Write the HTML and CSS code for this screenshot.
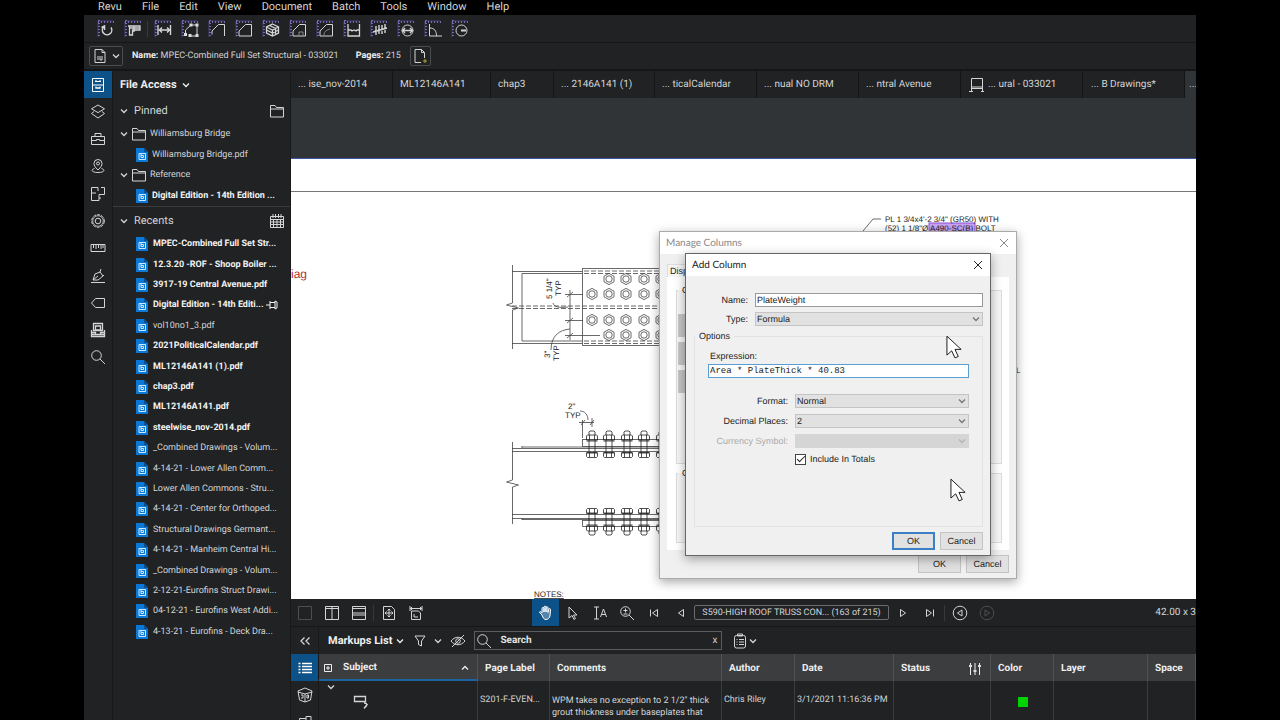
FILE: index.html
```html
<!DOCTYPE html>
<html lang="en">
<head>
<meta charset="utf-8">
<title>Revu</title>
<link rel="stylesheet" href="styles.css">
</head>
<body>
<svg class="sprite" aria-hidden="true">
  <symbol id="ruler" viewBox="0 0 20 20"><path d="M2 2v16M2 2h15" stroke="#4d3f7d" stroke-width="1"/><path d="M3 1v17M2 3h16" stroke="#7a68b4" stroke-width="2" stroke-dasharray="1 2"/></symbol>
  <symbol id="chev" viewBox="0 0 8 8"><path d="M1 2.500 4 5.500 7 2.500" stroke-width="1.300"/></symbol>
  <symbol id="folder" viewBox="0 0 16 16"><path d="M1.500 14V2.500h4.500l1.500 2h7V14zM1.500 6h13"/></symbol>
  <symbol id="pdf" viewBox="0 0 12 14"><path d="M0 0h8l4 4v10H0z" fill="#0a78d6" stroke="none"/><path d="M8 0v4h4z" fill="#0b4f93" stroke="none"/><path d="M3 5.500h6.500v6H3zM5 5.500v4h2.500v-2H5" stroke="#cfe8ff"/></symbol>
  <symbol id="glass" viewBox="0 0 16 16"><circle cx="6.500" cy="6.500" r="4.800"/><path d="m10 10 5 5"/></symbol>
  <symbol id="bolt" viewBox="-6 -16 12 28"><path d="M-3-11v-3l1-1h4l1 1v3M-5.500-10l1-1h9l1 1v4h-11zM-2.500-11v5M2.500-11v5M-3-6V7M3-6V7M-5.500 7h11v3.500l-1 1h-9l-1-1zM-2.500 7v4M2.500 7v4M-5.500-5h11M-5.500 6.500h11"/></symbol>
  <symbol id="hex" viewBox="-6 -6 12 12"><path d="M-5 2.800v-5.600L0-5.600 5-2.800v5.600L0 5.600z"/><circle r="3.200"/></symbol>
  <symbol id="cursor" viewBox="0 0 18 26"><path d="M1 1v20l5-4.500 3.500 7.500 3.500-1.500-3.500-7.500H16z" fill="#fff" stroke="#111"/></symbol>
</svg>

<div class="app">
  <nav class="menubar">
    <button>Revu</button><button>File</button><button>Edit</button><button>View</button><button>Document</button><button>Batch</button><button>Tools</button><button>Window</button><button>Help</button>
  </nav>

  <div class="toolbar">
    <button aria-label="Calibrate"><svg viewBox="0 0 20 20"><use href="#ruler"/><path d="M8 7.500a4.700 4.700 0 1 0 7 1M5.500 8.500 8.500 7v4" stroke-width="1.500"/></svg></button>
    <button aria-label="Measure tool"><svg viewBox="0 0 20 20"><use href="#ruler"/><path d="M5 7h12v4H9.500v5H6.500V7M7 9h10M11 7v6" stroke-width="1.300"/></svg></button>
    <i class="sep"></i>
    <button aria-label="Length"><svg viewBox="0 0 20 20"><use href="#ruler"/><path d="M5 6v10M17.500 6v10M6 11h11M9 8.500 6.500 11 9 13.500M14 8.500l2.500 2.500-2.500 2.500" stroke-width="1.400"/></svg></button>
    <button aria-label="Polylength"><svg viewBox="0 0 20 20"><use href="#ruler"/><path d="M5.500 15.500V11l5.500-5h6v11H10" /><path d="M4 14h3v3H4zM9.500 4.500h3v3h-3zM15.500 4.500h3v3h-3zM15.500 15h3v3h-3zM8.500 15h3v3h-3z" fill="#ddd" stroke="none"/></svg></button>
    <button aria-label="Perimeter"><svg viewBox="0 0 20 20"><use href="#ruler"/><path d="M5 15.500V12l6.500-6.500h6V17"/></svg></button>
    <button aria-label="Area"><svg viewBox="0 0 20 20"><use href="#ruler"/><path d="M5 17v-5l6.500-6.500h6V17z"/></svg></button>
    <button aria-label="Volume"><svg viewBox="0 0 20 20"><use href="#ruler"/><path d="m11.500 5 6 3v6l-6 3-6-3V8zM5.500 8l6 3 6-3M11.500 11v6M8.500 6.500l6 3v6M5.500 11l6 3 6-3" stroke-width="1.300"/></svg></button>
    <button aria-label="Cutout"><svg viewBox="0 0 20 20"><use href="#ruler"/><path d="M5 17v-5l6.500-6.500h6V17z"/><path d="M11 17v-4h4v4" stroke="#888"/></svg></button>
    <button aria-label="Arc cutout"><svg viewBox="0 0 20 20"><use href="#ruler"/><path d="M5 17v-5l6.500-6.500h6V17z"/><path d="M9 16c0-4 3-5 6-6" stroke="#888"/></svg></button>
    <button aria-label="Depth"><svg viewBox="0 0 20 20"><use href="#ruler"/><path d="M6 5v12h11.500V5M6 11h3l1 1 2-1 2 1 1-1h2.500" stroke-width="1.300"/></svg></button>
    <button aria-label="Count"><svg viewBox="0 0 20 20"><use href="#ruler"/><path d="M7 7v9M10 6v9M13 6v9M16 5v9M4 13l14-4" stroke-width="1.400"/></svg></button>
    <button aria-label="Diameter"><svg viewBox="0 0 20 20"><use href="#ruler"/><circle cx="11.500" cy="11.500" r="5.500"/><path d="M6 11.500h11M9 9l-2.500 2.500L9 14M14 9l2.500 2.500L14 14" stroke-width="1.400"/></svg></button>
    <button aria-label="Angle"><svg viewBox="0 0 20 20"><use href="#ruler"/><path d="M6.500 5v12H19M6.500 9c5 0 7 3 7 8"/></svg></button>
    <button aria-label="Radius"><svg viewBox="0 0 20 20"><use href="#ruler"/><circle cx="11.500" cy="11.500" r="5.500"/><path d="M11 11.500h5" stroke-width="2"/></svg></button>
  </div>

  <div class="filebar">
    <button class="outlined doc-btn" aria-label="Document"><svg class="i16" viewBox="0 0 16 16"><path d="M3 1.500h7l3 3v10H3zM10 1.500v3h3M6 8v4M8 8v4h2V8"/></svg><svg class="i8"><use href="#chev"/></svg></button>
    <span class="fname"><b>Name:</b> MPEC-Combined Full Set Structural - 033021</span>
    <span class="fpages"><b>Pages:</b> 215</span>
    <button class="outlined" aria-label="Add page"><svg class="i16" viewBox="0 0 16 16"><path d="M9 14.500H3v-13h6.500l3 3V10M9.500 1.500v3h3"/><path d="M13 11v4M11 13h4" stroke="#b5a02f"/></svg></button>
  </div>

  <div class="body">
    <nav class="rail">
      <button class="on" aria-label="File Access"><svg viewBox="0 0 16 16"><path d="M2.500 1.500h11v13h-11zM2.500 8h11M5 4.500h6M5 11h6M6 3v1.500h4V3M6 9.500V11h4V9.500"/></svg></button>
      <button aria-label="Layers"><svg viewBox="0 0 16 16"><path d="m8 1 6.500 3.800L8 8.600 1.500 4.800zM4 7.500 1.500 9.500 8 14l6.500-4.500L12 7.500"/></svg></button>
      <button aria-label="Tool Chest"><svg viewBox="0 0 16 16"><path d="M1.500 5.500h13v8h-13zM5 5.500v-3h6v3M1.500 9.500h5v-1h3v1h5"/></svg></button>
      <button aria-label="Places"><svg viewBox="0 0 16 16"><path d="M8 12C5 9 4 7.500 4 5.500a4 4 0 0 1 8 0c0 2-1 3.500-4 6.500zM4.500 10.500C0 12 2 14.500 8 14.500s8-2.500 3.500-4"/><circle cx="8" cy="5.500" r="1.500"/></svg></button>
      <button aria-label="Spaces"><svg viewBox="0 0 16 16"><path d="M8 1.500H1.500v13H5M8 1.500V5M11 1.500h3.500v7H9M1.500 7H6M9 8.500v6H5M9 12h2"/></svg></button>
      <button aria-label="Properties"><svg viewBox="0 0 16 16"><circle cx="8" cy="8" r="6.300" stroke-dasharray="3 1"/><circle cx="8" cy="8" r="5.300" stroke-width=".8"/><circle cx="8" cy="8" r="2.800"/></svg></button>
      <button aria-label="Measurements"><svg viewBox="0 0 16 16"><path d="M1 4.500h14v7H1zM3.500 5v3M6 5v4M8.500 5v3M11 5v4M13 5v3"/></svg></button>
      <button aria-label="Signatures"><svg viewBox="0 0 16 16"><path d="M1 14.500h14M3 12l2-6 5-2 3 4-5 4zM10 4l1-3M3 12l5-4M13 8l1-1"/></svg></button>
      <button aria-label="Flags"><svg viewBox="0 0 16 16"><path d="M5.500 3.500h9v9h-9L1.500 8z"/></svg></button>
      <button aria-label="Sets"><svg viewBox="0 0 16 16"><path d="M3.500 1.500h9v7h-9zM1.500 8v6.500h13V8M1.500 10.500h4v2h5v-2h4M1.500 12.500h13M5.500 4h5v4h-5z" stroke-width="1.300"/></svg></button>
      <button aria-label="Search"><svg viewBox="0 0 16 16"><use href="#glass"/></svg></button>
    </nav>

    <aside class="panel">
      <button class="panel-title">File Access <svg class="i8"><use href="#chev"/></svg></button>
      <h3 class="section pinned"><svg class="i8"><use href="#chev"/></svg><span>Pinned</span><svg class="i16"><use href="#folder"/></svg></h3>
      <ul class="tree">
        <li class="dir"><svg class="i8"><use href="#chev"/></svg><svg class="i16"><use href="#folder"/></svg><span>Williamsburg Bridge</span></li>
        <li><svg class="pdf"><use href="#pdf"/></svg><span>Williamsburg Bridge.pdf</span></li>
        <li class="dir"><svg class="i8"><use href="#chev"/></svg><svg class="i16"><use href="#folder"/></svg><span>Reference</span></li>
        <li class="open"><svg class="pdf"><use href="#pdf"/></svg><span>Digital Edition - 14th Edition ...</span></li>
      </ul>
      <h3 class="section recents"><svg class="i8"><use href="#chev"/></svg><span>Recents</span><svg class="i16" viewBox="0 0 16 16"><path d="M1.500 3.500h13v11h-13zM1.500 6.500h13M1.500 9h13M1.500 11.500h13M4.500 6v8M8 6v8M11.500 6v8M4 1v4M6.500 1v4M9.500 1v4M12 1v4"/></svg></h3>
      <ul class="files">
        <li class="open"><svg class="pdf"><use href="#pdf"/></svg><span>MPEC-Combined Full Set Str...</span></li>
        <li class="open"><svg class="pdf"><use href="#pdf"/></svg><span>12.3.20 -ROF - Shoop Boiler ...</span></li>
        <li class="open"><svg class="pdf"><use href="#pdf"/></svg><span>3917-19 Central Avenue.pdf</span></li>
        <li class="open"><svg class="pdf"><use href="#pdf"/></svg><span>Digital Edition - 14th Editi...</span><svg class="pin" viewBox="0 0 12 10"><path d="M0 5h4M4 1v8M4 2.500h5M4 7.500h5M9 1l2 1v6L9 9z"/></svg></li>
        <li><svg class="pdf"><use href="#pdf"/></svg><span>vol10no1_3.pdf</span></li>
        <li class="open"><svg class="pdf"><use href="#pdf"/></svg><span>2021PoliticalCalendar.pdf</span></li>
        <li class="open"><svg class="pdf"><use href="#pdf"/></svg><span>ML12146A141 (1).pdf</span></li>
        <li class="open"><svg class="pdf"><use href="#pdf"/></svg><span>chap3.pdf</span></li>
        <li class="open"><svg class="pdf"><use href="#pdf"/></svg><span>ML12146A141.pdf</span></li>
        <li class="open"><svg class="pdf"><use href="#pdf"/></svg><span>steelwise_nov-2014.pdf</span></li>
        <li><svg class="pdf"><use href="#pdf"/></svg><span>_Combined Drawings - Volum...</span></li>
        <li><svg class="pdf"><use href="#pdf"/></svg><span>4-14-21 - Lower Allen Comm...</span></li>
        <li><svg class="pdf"><use href="#pdf"/></svg><span>Lower Allen Commons - Stru...</span></li>
        <li><svg class="pdf"><use href="#pdf"/></svg><span>4-14-21 - Center for Orthoped...</span></li>
        <li><svg class="pdf"><use href="#pdf"/></svg><span>Structural Drawings Germant...</span></li>
        <li><svg class="pdf"><use href="#pdf"/></svg><span>4-14-21 - Manheim Central Hi...</span></li>
        <li><svg class="pdf"><use href="#pdf"/></svg><span>_Combined Drawings - Volum...</span></li>
        <li><svg class="pdf"><use href="#pdf"/></svg><span>2-12-21-Eurofins Struct Drawi...</span></li>
        <li><svg class="pdf"><use href="#pdf"/></svg><span>04-12-21 - Eurofins West Addi...</span></li>
        <li><svg class="pdf"><use href="#pdf"/></svg><span>4-13-21 - Eurofins - Deck Dra...</span></li>
      </ul>
    </aside>

    <main class="main">
      <div class="tabs">
        <button class="w102">... ise_nov-2014</button><button class="w98">ML12146A141</button><button class="w63">chap3</button><button class="w101">... 2146A141 (1)</button><button class="w102">... ticalCalendar</button><button class="w102">... nual NO DRM</button><button class="w102">... ntral Avenue</button><button class="w122"><svg class="i16" viewBox="0 0 16 16"><path d="M3.500 14V1.500h11V14M3.500 10h11M1 14.500h4M13 14.500h3M3.500 11.500h11"/></svg>... ural - 033021</button><button class="w102 pad">... B Drawings*</button><button class="current">...</button>
      </div>

      <div class="document">
        <svg class="sheet" viewBox="291 158 905 441" role="img" aria-label="Truss connection drawing">
          <path d="M291 158.500h905" stroke="#3955a5"/>
          <path d="M291 191.500h905" stroke="#777"/>
          <text x="291" y="278" class="red">iag</text>
          <g class="ink">
            <path d="M512.500 265v38l-6 2 12 3-6 2v39M512 271.500h70M512 343.500h70M582 273.500h-60v67.500h60M582.500 268.500h90M582.500 268v77.500h90"/>
            <path d="M584 271h80M584 273.500h80M584 341h80M584 343.500h80M512 306h150M512 308.500h150" stroke-dasharray="5 2"/>
            <path d="M570 290v50M565 294.500h18M565 320.500h18M565 335.500h35M567 297l6-5M567 323l6-5M567 338l6-5M553 303c1 4 6 5 15 4M551 350c0-14 8-20 19-21"/>
            <path d="M512.500 442v38l-6 2 12 3-6 2v37M512 448.500h150M512 451.500h150M512 514.500h150M512 518.500h150M522 447h138M522 519.500h138M522 446v2M522 518v2M582.500 439.500h80M582.500 439v7.500h80M582.500 520.500h80M582.500 520v6.500h80"/>
            <path d="M582.500 420v18M579 422.500h15M581 425l4-5M590 425l4-5M592 418v9M580 411c5 0 8 4 8 9"/>
            <path d="M863 231l10-12h8"/>
          </g>
          <g class="ink">
            <use href="#hex" x="603" y="273" width="12" height="12"/><use href="#hex" x="620" y="273" width="12" height="12"/><use href="#hex" x="638" y="273" width="12" height="12"/><use href="#hex" x="655" y="273" width="12" height="12"/>
            <use href="#hex" x="586" y="288" width="12" height="12"/><use href="#hex" x="603" y="288" width="12" height="12"/><use href="#hex" x="620" y="288" width="12" height="12"/><use href="#hex" x="638" y="288" width="12" height="12"/><use href="#hex" x="655" y="288" width="12" height="12"/>
            <use href="#hex" x="586" y="314" width="12" height="12"/><use href="#hex" x="603" y="314" width="12" height="12"/><use href="#hex" x="620" y="314" width="12" height="12"/><use href="#hex" x="638" y="314" width="12" height="12"/><use href="#hex" x="655" y="314" width="12" height="12"/>
            <use href="#hex" x="603" y="329" width="12" height="12"/><use href="#hex" x="620" y="329" width="12" height="12"/><use href="#hex" x="638" y="329" width="12" height="12"/><use href="#hex" x="655" y="329" width="12" height="12"/>
          </g>
          <g class="ink bolts">
            <use href="#bolt" x="586" y="430" width="12" height="28"/><use href="#bolt" x="603" y="430" width="12" height="28"/><use href="#bolt" x="621" y="430" width="12" height="28"/><use href="#bolt" x="638" y="430" width="12" height="28"/><use href="#bolt" x="656" y="430" width="12" height="28"/>
            <g transform="matrix(1 0 0 -1 0 966)"><use href="#bolt" x="586" y="430" width="12" height="28"/><use href="#bolt" x="603" y="430" width="12" height="28"/><use href="#bolt" x="621" y="430" width="12" height="28"/><use href="#bolt" x="638" y="430" width="12" height="28"/><use href="#bolt" x="656" y="430" width="12" height="28"/></g>
          </g>
          <rect x="929" y="223" width="46" height="10" fill="#c9a3f5" stroke="#8a4fd8"/>
          <g class="note">
            <text x="885" y="222">PL 1 3/4x4'-2 3/4" (GR50) WITH</text>
            <text x="885" y="231">(52) 1 1/8"Ø A490-SC(B) BOLT</text>
            <text x="1016" y="373">L</text>
            <text x="568" y="409">2"</text><text x="565" y="418">TYP</text>
            <text transform="translate(552 299) rotate(-90)">5 1/4"</text><text transform="translate(561 296) rotate(-90)">TYP</text>
            <text transform="translate(550 358) rotate(-90)">3"</text><text transform="translate(559 361) rotate(-90)">TYP</text>
            <text x="534" y="597" text-decoration="underline">NOTES:</text>
          </g>
        </svg>

        <section class="dialog manage" aria-label="Manage Columns">
          <header><h2>Manage Columns</h2><button aria-label="Close"><svg viewBox="0 0 10 10"><path d="m1 1 8 8M9 1 1 9"/></svg></button></header>
          <div class="manage-body">
            <span class="tab-label">Disp</span>
            <div class="tab-page">
              <fieldset class="tall"><legend>C</legend><button aria-label="Add"></button><button aria-label="Modify"></button><button aria-label="Remove"></button></fieldset>
              <fieldset class="short"><legend>C</legend></fieldset>
            </div>
            <div class="actions"><button>OK</button><button>Cancel</button></div>
          </div>
        </section>

        <section class="dialog add" aria-label="Add Column">
          <header><h2>Add Column</h2><button aria-label="Close"><svg viewBox="0 0 10 10"><path d="m1 1 8 8M9 1 1 9"/></svg></button></header>
          <form class="add-body">
            <div class="grid top">
              <label for="name">Name:</label><input id="name" type="text" value="PlateWeight">
              <label for="type">Type:</label><span class="drop"><select id="type"><option>Formula</option></select><svg class="i8"><use href="#chev"/></svg></span>
            </div>
            <fieldset>
              <legend>Options</legend>
              <label class="expr" for="expr">Expression:</label>
              <input id="expr" type="text" value="Area * PlateThick * 40.83">
              <div class="grid opts">
                <label for="format">Format:</label><span class="drop"><select id="format"><option>Normal</option></select><svg class="i8"><use href="#chev"/></svg></span>
                <label for="places">Decimal Places:</label><span class="drop"><select id="places"><option>2</option></select><svg class="i8"><use href="#chev"/></svg></span>
                <label class="dim" for="currency">Currency Symbol:</label><span class="drop off"><select id="currency" disabled><option></option></select><svg class="i8"><use href="#chev"/></svg></span>
              </div>
              <div class="check"><input id="totals" type="checkbox" checked><label for="totals">Include In Totals</label></div>
            </fieldset>
            <div class="actions"><button type="button" class="default">OK</button><button type="button">Cancel</button></div>
          </form>
        </section>
        <svg class="cursor c1"><use href="#cursor"/></svg>
        <svg class="cursor c2"><use href="#cursor"/></svg>
      </div>

      <div class="status">
        <button class="faint" aria-label="Single view"><svg viewBox="0 0 16 16"><path d="M1.500 1.500h13v13h-13z"/></svg></button>
        <button aria-label="Split vertical"><svg viewBox="0 0 16 16"><path d="M1.500 1.500h13v13h-13zM8 1.500v13M1.500 3.500h13"/></svg></button>
        <button aria-label="Split horizontal"><svg viewBox="0 0 16 16"><path d="M1.500 1.500h13v13h-13zM1.500 8h13M1.500 3.500h13M1.500 10h13"/></svg></button>
        <i class="sep"></i>
        <button aria-label="Fit page"><svg viewBox="0 0 16 16"><path d="M2.500 1.500h8l3 3v10h-11zM8 4v8M4 8h8M6.500 5.500 8 4l1.500 1.500M6.500 10.500 8 12l1.500-1.500M5.500 6.500 4 8l1.500 1.500M10.500 6.500 12 8l-1.500 1.500"/></svg></button>
        <button aria-label="Fit width"><svg viewBox="0 0 16 16"><path d="M3.500 6v8.500h9V8l-2-2zM2 3.500h12M2 1v5M14 1v5M4 2 2.500 3.500 4 5M12 2l1.500 1.500L12 5M6 9v3h4"/></svg></button>
        <div class="nav">
          <button class="on" aria-label="Pan"><svg viewBox="0 0 16 16"><path d="M4 10 1.500 7.500c0-1.500 1.500-1 2.500.500V3.500c0-1.500 2-1.500 2 0V7 2.300c0-1.600 2-1.600 2 0V7 2.800c0-1.500 2-1.500 2 0V7.500l.500-3c0-1.200 2-1.200 2 0L12 11c-.5 2-2 3.500-4 3.500S5 13 4 10z" fill="#fff" fill-opacity=".3"/></svg></button>
          <button aria-label="Select"><svg viewBox="0 0 16 16"><path d="M4 2v11l3-2.500 2 4 1.500-1-2-3.500H12z"/></svg></button>
          <button aria-label="Select text"><svg viewBox="0 0 16 16"><path d="M2 2h5M2 14h5M4.500 2v12M8.500 12l3-8 3 8M9.500 9.500h4"/></svg></button>
          <button aria-label="Zoom"><svg viewBox="0 0 16 16"><use href="#glass"/><path d="M4.500 5.500h4M6.500 3.500v4M4.500 9h4"/></svg></button>
          <button aria-label="First page"><svg viewBox="0 0 16 16"><path d="M4.500 4.500v7M11.500 4.500v7L6.500 8z"/></svg></button>
          <button aria-label="Previous page"><svg viewBox="0 0 16 16"><path d="M10.500 4.500v7L5.500 8z"/></svg></button>
          <input type="text" aria-label="Page" value="S590-HIGH ROOF TRUSS CON... (163 of 215)">
          <button aria-label="Next page"><svg viewBox="0 0 16 16"><path d="M5.500 4.500v7l5-3.500z"/></svg></button>
          <button aria-label="Last page"><svg viewBox="0 0 16 16"><path d="M4.500 4.500v7l5-3.500zM11.500 4.500v7"/></svg></button>
          <i class="sep"></i>
          <button aria-label="Previous view"><svg viewBox="0 0 16 16"><circle cx="8" cy="8" r="6.800"/><path d="M10 5v6L5.500 8z"/></svg></button>
          <button class="faint" aria-label="Next view"><svg viewBox="0 0 16 16"><circle cx="8" cy="8" r="6.800"/><path d="M6 5v6l4.500-3z"/></svg></button>
        </div>
        <span class="size">42.00 x 3</span>
      </div>

      <section class="markups">
        <nav class="mrail">
          <button aria-label="Collapse"><svg viewBox="0 0 16 16"><path d="M7.500 4.500 4 8l3.500 3.500M12.500 4.500 9 8l3.500 3.500" stroke-width="1.300"/></svg></button>
          <button class="on" aria-label="List"><svg viewBox="0 0 16 16"><path d="M1.500 3.500h2M5 3.500h10M1.500 6.500h2M5 6.500h10M1.500 9.500h2M5 9.500h10M1.500 12.500h2M5 12.500h10" stroke-width="1.500"/></svg></button>
          <button aria-label="3D"><svg viewBox="0 0 16 16"><path d="m8 1 7 3-1.500 9L8 15l-5.500-2L1 4zM1 5l7 2 7-2M8 7v8M4 8h2v3H4M10 8h1.500v3H10z"/></svg></button>
          <button aria-label="Links"><svg viewBox="0 0 16 16"><path d="M9 4.500H2.500V15M9 2.500h5v4H9z"/></svg></button>
        </nav>
        <div class="mmain">
          <div class="mbar">
            <button class="mtitle">Markups List <svg class="i8"><use href="#chev"/></svg></button>
            <button class="filter" aria-label="Filter"><svg class="i16" viewBox="0 0 16 16"><path d="M3 3h10L9.500 8v5l-3-1.500V8z"/></svg><svg class="i8"><use href="#chev"/></svg></button>
            <button aria-label="Hide markups"><svg class="i16" viewBox="0 0 16 16"><path d="M1 8c4-5 10-5 14 0-4 5-10 5-14 0zM2 14 14 2"/><circle cx="8" cy="8" r="2.300"/></svg></button>
            <label class="search"><svg class="i16"><use href="#glass"/></svg><input type="text" placeholder="Search" aria-label="Search"><span>x</span></label>
            <button class="clip" aria-label="Summary"><svg class="i16" viewBox="0 0 16 16"><rect x="2.500" y="2.500" width="11" height="12.500" rx="2"/><path d="M5.500 1h5v2h-5zM4.500 6.500h1M7 6.500h5M4.500 9h1M7 9h5M4.500 11.500h1M7 11.500h5"/></svg><svg class="i8"><use href="#chev"/></svg></button>
          </div>
          <table>
            <colgroup><col class="c159"><col class="c72"><col class="c172"><col class="c73"><col class="c99"><col class="c97"><col class="c63"><col class="c94"><col></colgroup>
            <thead><tr>
              <th class="subject"><div><svg class="i8" viewBox="0 0 8 8"><path d="M.5.5h7v7h-7zM2 4h4M4 2v4"/></svg><span>Subject</span><svg class="i8 up"><use href="#chev"/></svg></div></th>
              <th>Page Label</th><th>Comments</th><th>Author</th><th>Date</th>
              <th><div><span>Status</span><svg class="i16" viewBox="0 0 16 16"><path d="M3.500 2v12M8 2v12M12.500 2v12"/><path d="M2 4h3v2H2zM6.500 9h3v2h-3zM11 4h3v2h-3z" fill="#ddd" stroke="none"/></svg></div></th>
              <th>Color</th><th>Layer</th><th>Space</th>
            </tr></thead>
            <tbody><tr>
              <td class="tree-cell"><svg class="i8"><use href="#chev"/></svg><svg class="i16" viewBox="0 0 16 16"><path d="M1.500 2.500h11v5h-11zM11 9c3.500 0 3.500 2.500 1 4.500M14.500 10l-3.500 4.500" stroke-width="1.300"/></svg></td>
              <td>S201-F-EVEN...</td><td class="comment">WPM takes no exception to 2 1/2" thick<br>grout thickness under baseplates that</td><td>Chris Riley</td><td>3/1/2021 11:16:36 PM</td><td></td><td><i class="swatch"></i></td><td></td><td></td>
            </tr></tbody>
          </table>
        </div>
      </section>
    </main>
  </div>
</div>
</body>
</html>
```

FILE: styles.css
```css
* { box-sizing: border-box; }
body { margin: 0; background: #000; color: #d4d5d6; font: 10px/12px Roboto, sans-serif; text-rendering: geometricPrecision; }
button, input, select { font: inherit; color: inherit; margin: 0; padding: 0; border: 0; background: none; border-radius: 0; text-rendering: inherit; }
button { display: flex; align-items: center; justify-content: center; white-space: nowrap; }
ul, h2, h3 { margin: 0; padding: 0; list-style: none; font: inherit; }
svg { display: block; flex: none; fill: none; stroke: currentColor; }
text { stroke: none; }
.sprite { position: absolute; width: 0; height: 0; }
.i16 { width: 16px; height: 16px; }
.i8 { width: 8px; height: 8px; }
.on { background: #0d5189; color: #fff; }
.faint { color: #4c4e50; }
.sep { width: 1px; height: 16px; margin: 0 1px; background: #36393b; flex: none; }

.app { display: flex; flex-direction: column; height: 100vh; padding: 0 84px; overflow: hidden; }
.menubar { display: flex; gap: 20px; height: 15px; padding: 0 14px; font-size: 11px; line-height: 14px; }
.menubar button { align-items: flex-start; }
.toolbar { display: flex; align-items: center; height: 28px; padding-left: 8px; background: #202224; border-bottom: 1px solid #141617; }
.toolbar button { width: 27px; height: 27px; }
.toolbar svg { width: 20px; height: 20px; }
.filebar { display: flex; align-items: center; gap: 9px; height: 28px; padding-left: 5px; background: #202224; border-bottom: 2px solid #141617; font-size: 9px; }
.outlined { width: 21px; height: 20px; border: 1px solid #4a4c4e; border-radius: 2px; }
.doc-btn { width: 34px; gap: 4px; }
.filebar b { color: #eee; font-weight: 700; }
.fname { margin-right: 8px; }

.body { display: flex; flex: 1; min-height: 0; background: #202224; }
.rail { display: grid; grid-auto-rows: 1fr; align-self: flex-start; width: 28px; min-height: 300px; flex: none; }
.rail svg { width: 16px; height: 16px; }
.panel { width: 179px; flex: none; border-left: 1px solid #17191a; border-right: 1px solid #17191a; overflow: hidden; }
.panel-title { height: 27px; padding-left: 7px; gap: 5px; font-size: 11px; font-weight: 700; color: #f0f0f0; }
.section { display: flex; align-items: center; gap: 6px; height: 26px; padding: 0 5px 0 7px; font-size: 11px; }
.section span { flex: 1; }
.tree, .files { display: grid; grid-auto-rows: 1fr; font-size: 9px; }
.tree { min-height: 82px; }
.tree li, .files li { display: flex; align-items: center; gap: 4px; padding-left: 23px; white-space: nowrap; }
.tree li.dir { padding-left: 7px; gap: 3px; }
.pdf { width: 12px; height: 14px; }
.pin { width: 12px; height: 10px; margin-left: -3px; }
.open { color: #f2f2f2; font-weight: 700; }
.recents { border-top: 1px solid #3a3c3e; height: 28px; }
.files { min-height: 408px; }
.files li { gap: 5px; }

.main { display: flex; flex-direction: column; flex: 1; min-width: 0; }
.tabs { display: flex; height: 27px; overflow: hidden; }
.tabs button { justify-content: flex-start; flex: none; padding-left: 7px; gap: 4px; border-right: 1px solid #131415; }
.tabs .pad { padding-left: 8px; }
.tabs .current { flex: 1; min-width: 0; padding-left: 4px; background: #303436; border: 0; }
.w63 { width: 63px; } .w98 { width: 98px; } .w101 { width: 101px; } .w102 { width: 102px; } .w122 { width: 122px; }

.document { position: relative; flex: 1; min-height: 0; padding-top: 60px; background: #303436; overflow: hidden; }
.sheet { width: 905px; height: 441px; background: #fff; }
.ink { stroke: #444; stroke-width: .8; }
.bolts { stroke: #222; }
.note { font: 8px "Liberation Sans", sans-serif; fill: #222; }
.red { font: 12px "Liberation Sans", sans-serif; fill: #b03030; }

.dialog { position: absolute; background: #f0f0f0; border: 1px solid #aaa; color: #222; font: 9px/12px "Liberation Sans", sans-serif; box-shadow: 0 3px 10px rgba(0, 0, 0, .35); }
.dialog header { display: flex; align-items: center; justify-content: space-between; height: 22px; padding: 0 7px 0 6px; background: #fff; font: 10px/12px Lato, sans-serif; }
.dialog header svg { width: 10px; height: 10px; }
.dialog fieldset { margin: 0; min-width: 0; border: 1px solid #dcdcdc; }
.dialog legend { padding: 0 4px; }
.manage { left: 368px; top: 133px; width: 358px; }
.manage header { color: #888; }
.manage-body { display: flex; flex-direction: column; padding: 10px 7px 5px 7px; }
.tab-label { align-self: flex-start; height: 13px; width: 40px; padding: 0 2px; background: #f5f5f5; border: 1px solid #ddd; border-bottom: 0; }
.tab-page { display: flex; flex-direction: column; gap: 3px; padding: 7px 7px 7px 9px; background: #fff; }
.tab-page fieldset { padding: 18px 1px 0; background: #f6f6f6; }
.tall { height: 180px; }
.short { height: 76px; }
.tab-page button { width: 40px; height: 23px; margin-bottom: 5px; background: #c6c6c6; }
.actions { display: flex; justify-content: flex-end; gap: 5px; padding-top: 5px; }
.actions button { width: 43px; height: 18px; background: #e1e1e1; border: 1px solid #c4c4c4; }
.actions .default { border: 2px solid #3b7fc4; }

.add { left: 394px; top: 155px; width: 306px; border-color: #666; }
.add-body { padding: 17px 7px 5px 8px; }
.grid { display: grid; grid-auto-rows: 14px; column-gap: 7px; align-items: center; }
.grid > label { text-align: right; white-space: nowrap; }
.top { grid-template-columns: 54px 1fr; row-gap: 5px; }
.opts { grid-template-columns: 80px 1fr; row-gap: 6px; margin-top: 16px; }
.dialog input[type="text"] { width: 100%; height: 14px; padding: 0 1px; background: #fff; border: 1px solid #999; display: block; }
.add-body fieldset { min-height: 197px; margin-top: 4px; padding: 8px 13px 0 13px; border-color: #e2e2e2; }
.add-body legend { margin-left: -13px; }
.expr { display: block; padding-left: 2px; margin-bottom: 2px; }
.dialog #expr { border-color: #5a9fd4; font: 9px/12px "Liberation Mono", monospace; }
.drop { position: relative; height: 14px; }
.drop select { display: block; width: 100%; height: 14px; padding: 0 1px; appearance: none; background: #e1e1e1; border: 1px solid #c4c4c4; }
.drop svg { position: absolute; right: 3px; top: 3px; color: #777; pointer-events: none; }
.drop.off select { background: #cacaca; border-color: #cacaca; }
.drop.off svg { color: #b4b4b4; }
.dim { color: #aaa; }
.check { display: flex; align-items: center; gap: 4px; padding: 5px 0 0 87px; }
.check input { appearance: none; width: 11px; height: 11px; border: 1px solid #444; background: #fff; display: grid; place-items: center; }
.check input::after { content: ""; width: 7px; height: 3px; border: solid #222; border-width: 0 0 1px 1px; rotate: -45deg; margin-bottom: 2px; }
.cursor { position: absolute; width: 17px; height: 25px; }
.c1 { left: 655px; top: 237px; }
.c2 { left: 659px; top: 380px; }

.status { display: flex; align-items: center; height: 28px; flex: none; border-bottom: 1px solid #151718; overflow: hidden; }
.status button { width: 27px; height: 27px; flex: none; }
.status svg { width: 16px; height: 16px; }
.nav { display: flex; align-items: center; margin-left: 103px; }
.nav input { width: 195px; height: 15px; padding: 0 2px; border: 1px solid #6a6c6e; border-radius: 2px; text-align: center; font-size: 9px; }
.size { margin-left: auto; }

.markups { display: flex; height: 93px; flex: none; overflow: hidden; }
.mrail { width: 28px; flex: none; border-right: 1px solid #17191a; }
.mrail button { width: 27px; height: 27px; }
.mrail svg { width: 16px; height: 16px; }
.mmain { flex: 1; min-width: 0; }
.mbar { display: flex; align-items: center; gap: 8px; height: 27px; padding-left: 9px; }
.mtitle { gap: 4px; font-size: 11px; font-weight: 700; color: #f0f0f0; }
.filter { gap: 6px; }
.search { display: flex; align-items: center; width: 248px; height: 19px; padding: 0 4px 0 1px; border: 1px solid #5a5c5e; }
.search input { flex: 1; min-width: 0; padding-left: 8px; outline: 0; font-weight: 700; }
.search input::placeholder { color: #e4e4e4; opacity: 1; }
.clip { gap: 1px; padding-left: 2px; }
table { width: 100%; table-layout: fixed; border-collapse: separate; border-spacing: 0; }
.c159 { width: 159px; } .c72 { width: 72px; } .c172 { width: 172px; } .c73 { width: 73px; } .c99 { width: 99px; } .c97 { width: 97px; } .c63 { width: 63px; } .c94 { width: 94px; }
th { height: 27px; padding: 2px 7px 0; background: #3b3d3f; border-right: 1px solid #505254; text-align: left; color: #eee; white-space: nowrap; }
th div { display: flex; align-items: center; }
th span { flex: 1; }
.subject { padding: 2px 8px 0 5px; border-bottom: 2px solid #1d63a3; }
.subject div { gap: 11px; }
.up { transform: rotate(180deg); }
td { height: 60px; padding: 13px 0 0 2px; border-right: 1px solid #3b3d3f; vertical-align: top; white-space: nowrap; font-size: 9px; }
.comment { padding-top: 14px; }
.tree-cell { display: flex; gap: 18px; padding: 2px 8px; }
.tree-cell .i16 { margin-top: 11px; }
.swatch { display: block; width: 10px; height: 10px; margin: 3px auto 0; background: #00d400; }
```
